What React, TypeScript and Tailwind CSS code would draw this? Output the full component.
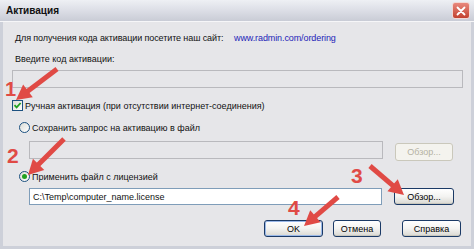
import React from "react";

function Arrow({ x1, y1, x2, y2 }: { x1: number; y1: number; x2: number; y2: number }) {
  const dx = x2 - x1;
  const dy = y2 - y1;
  const len = Math.hypot(dx, dy);
  const ux = dx / len;
  const uy = dy / len;
  const hl = 15;
  const hw = 8;
  const bx = x2 - ux * hl;
  const by = y2 - uy * hl;
  const nx = -uy;
  const ny = ux;
  const pts = `${x2},${y2} ${bx + nx * hw},${by + ny * hw} ${bx - nx * hw},${by - ny * hw}`;
  return (
    <g>
      <line x1={x1} y1={y1} x2={bx + ux * 2} y2={by + uy * 2} stroke="#e04a45" strokeWidth={5} strokeLinecap="butt" />
      <polygon points={pts} fill="#e04a45" />
    </g>
  );
}

function Btn({ children, w, def, disabled }: { children: React.ReactNode; w: string; def?: boolean; disabled?: boolean }) {
  if (disabled) {
    return (
      <div className={`${w} h-[18px] rounded-[3px] border border-[#cac8bb] bg-[#f4f3ee] flex items-center justify-center text-[#b5b2a3]`}>
        {children}
      </div>
    );
  }
  return (
    <div
      className={`${w} h-[17px] rounded-[3px] border border-[#1b3a66] bg-linear-to-b from-[#ffffff] via-[#f3f3f1] to-[#d9d8d2] flex items-center justify-center text-black ${
        def ? "shadow-[inset_0_0_0_1px_#9ab8e8]" : "shadow-[inset_0_-1px_0_#c9c7bd]"
      }`}
    >
      {children}
    </div>
  );
}

export default function App() {
  return (
    <div className="relative w-[474px] h-[249px] overflow-hidden bg-[#e6e6e9] font-['Liberation_Sans',Arial,sans-serif] text-[9px] leading-[12px] text-[#111] whitespace-nowrap">
      {/* title bar */}
      <div className="h-[22px] flex items-center justify-between bg-linear-to-b from-[#eef0f4] via-[#dcdee6] to-[#c9ccd6] border-b border-[#f6f6f8] pl-[6px] pr-[4px]">
        <span className="font-bold text-[10px] text-[#111]">Активация</span>
        <div className="w-[18px] h-[17px] rounded-[3px] border border-[#f2d8d4] bg-linear-to-b from-[#e8877c] to-[#c2412f] flex items-center justify-center">
          <svg width="10" height="10" viewBox="0 0 10 10">
            <path d="M1.5 1.5 L8.5 8.5 M8.5 1.5 L1.5 8.5" stroke="#fff" strokeWidth="1.8" strokeLinecap="round" />
          </svg>
        </div>
      </div>
      {/* body */}
      <div className="h-[227px] border-x-[3px] border-b-[3px] border-[#cdd0d9] pl-[9px] flex flex-col">
        <div className="mt-[10px] flex ml-[3px]">
          <span className="w-[219px] tracking-[-0.1px]">Для получения кода активации посетите наш сайт:</span>
          <span className="text-[#2424b8] tracking-[-0.1px]">www.radmin.com/ordering</span>
        </div>
        <div className="mt-[9px] ml-[3px]">Введите код активации:</div>
        <div className="mt-[5px] w-[451px] h-[18px] border border-[#b9b9bd] bg-[#e6e6e9]" />
        <div className="mt-[12px] flex items-center h-[11px]">
          <div className="w-[11px] h-[11px] border border-[#1c5180] bg-linear-to-br from-[#dcdcd6] to-[#ffffff] flex items-center justify-center">
            <svg width="9" height="9" viewBox="0 0 9 9">
              <path d="M1.5 4.2 L3.6 6.4 L7.6 2" stroke="#21a121" strokeWidth="1.8" fill="none" />
            </svg>
          </div>
          <span className="ml-[2px]">Ручная активация (при отсутствии интернет-соединения)</span>
        </div>
        <div className="mt-[11px] flex items-center h-[11px] ml-[7px]">
          <div className="w-[11px] h-[11px] rounded-full border border-[#1c5180] bg-linear-to-br from-[#dcdcd6] to-[#ffffff]" />
          <span className="ml-[2px]">Сохранить запрос на активацию в файл</span>
        </div>
        <div className="mt-[8px] flex ml-[17px] h-[20px]">
          <div className="w-[354px] h-[18px] border border-[#b9b9bd] bg-[#e6e6e9]" />
          <div className="ml-[12px] mt-[2px]">
            <Btn w="w-[58px]" disabled>
              Обзор...
            </Btn>
          </div>
        </div>
        <div className="mt-[10px] flex items-center h-[11px] ml-[7px]">
          <div className="w-[11px] h-[11px] rounded-full border border-[#1c5180] bg-linear-to-br from-[#dcdcd6] to-[#ffffff] flex items-center justify-center">
            <div className="w-[5px] h-[5px] rounded-full bg-[#21a121]" />
          </div>
          <span className="ml-[2px]">Применить файл с лицензией</span>
        </div>
        <div className="mt-[6px] flex ml-[17px] h-[17px]">
          <div className="w-[353px] h-[17px] border border-[#7f9db9] bg-white pl-[3px] flex items-center">
            C:\Temp\computer_name.license
          </div>
          <div className="ml-[12px]">
            <Btn w="w-[60px]">Обзор...</Btn>
          </div>
        </div>
        <div className="mt-[15px] flex ml-[252px]">
          <Btn w="w-[59px]" def>
            OK
          </Btn>
          <div className="ml-[10px]">
            <Btn w="w-[48px]">Отмена</Btn>
          </div>
          <div className="ml-[21px]">
            <Btn w="w-[59px]">Справка</Btn>
          </div>
        </div>
      </div>

      {/* red annotations */}
      <svg className="absolute left-0 top-0 pointer-events-none" width="474" height="249">
        <Arrow x1={57} y1={69} x2={16} y2={100} />
        <Arrow x1={64} y1={139} x2={28} y2={175} />
        <Arrow x1={370} y1={166} x2={404} y2={195} />
        <Arrow x1={338} y1={197} x2={304} y2={226} />
      </svg>
      <span className="absolute left-[5px] top-[79px] text-[20px] leading-[20px] font-bold text-[#e04a45]">1</span>
      <span className="absolute left-[7px] top-[145px] text-[21px] leading-[21px] font-bold text-[#e04a45]">2</span>
      <span className="absolute left-[351px] top-[165px] text-[21px] leading-[21px] font-bold text-[#e04a45]">3</span>
      <span className="absolute left-[288px] top-[197px] text-[21px] leading-[21px] font-bold text-[#e04a45]">4</span>
    </div>
  );
}
